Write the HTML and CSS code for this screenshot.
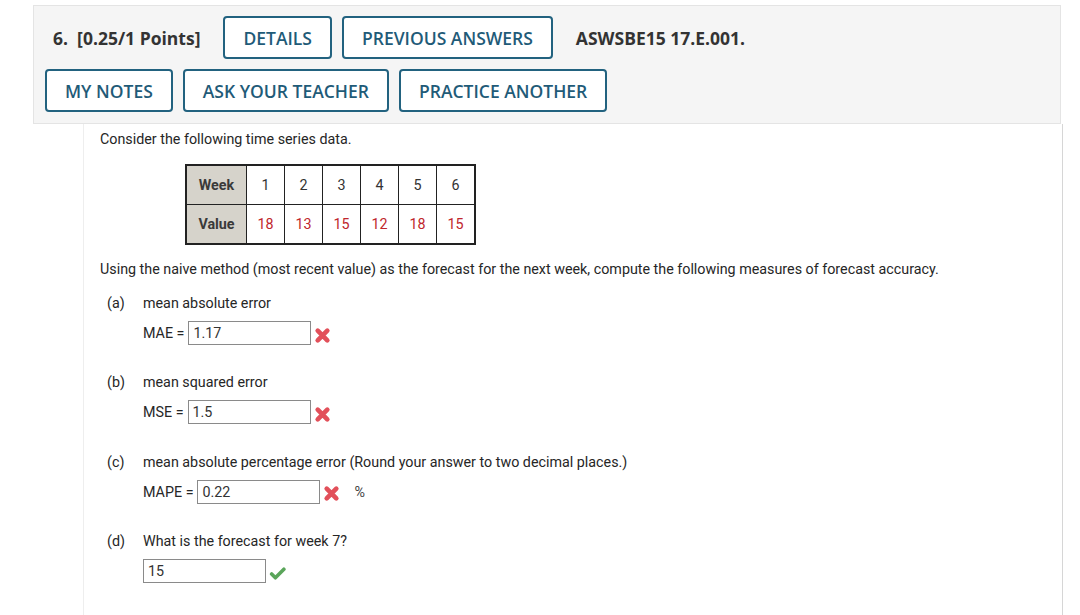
FILE: index.html
```html
<!DOCTYPE html>
<html>
<head>
<meta charset="utf-8">
<link rel="stylesheet" href="styles.css">
</head>
<body>
<div class="header">
  <div class="hrow">
    <span class="title">6.&nbsp; [0.25/1 Points]</span>
    <span class="btn">DETAILS</span>
    <span class="btn">PREVIOUS ANSWERS</span>
    <span class="code">ASWSBE15 17.E.001.</span>
  </div>
  <div class="hrow row2">
    <span class="btn">MY NOTES</span>
    <span class="btn">ASK YOUR TEACHER</span>
    <span class="btn">PRACTICE ANOTHER</span>
  </div>
</div>
<div class="content">
  <p class="intro">Consider the following time series data.</p>
  <table class="data">
    <tr><th>Week</th><td>1</td><td>2</td><td>3</td><td>4</td><td>5</td><td>6</td></tr>
    <tr><th>Value</th><td class="red">18</td><td class="red">13</td><td class="red">15</td><td class="red">12</td><td class="red">18</td><td class="red">15</td></tr>
  </table>
  <p class="using">Using the naive method (most recent value) as the forecast for the next week, compute the following measures of forecast accuracy.</p>

  <div class="part">
    <div class="plabel"><span class="pl">(a)</span><span>mean absolute error</span></div>
    <div class="answer"><span class="eq">MAE =</span><span class="inp">1.17</span><svg class="ico x" viewBox="0 0 16 16"><path d="M3.5 3.5L12.5 12.5M12.5 3.5L3.5 12.5"/></svg></div>
  </div>
  <div class="part">
    <div class="plabel"><span class="pl">(b)</span><span>mean squared error</span></div>
    <div class="answer"><span class="eq">MSE =</span><span class="inp">1.5</span><svg class="ico x" viewBox="0 0 16 16"><path d="M3.5 3.5L12.5 12.5M12.5 3.5L3.5 12.5"/></svg></div>
  </div>
  <div class="part">
    <div class="plabel"><span class="pl">(c)</span><span>mean absolute percentage error (Round your answer to two decimal places.)</span></div>
    <div class="answer"><span class="eq">MAPE =</span><span class="inp">0.22</span><svg class="ico x" viewBox="0 0 16 16"><path d="M3.5 3.5L12.5 12.5M12.5 3.5L3.5 12.5"/></svg><span class="pct">%</span></div>
  </div>
  <div class="part">
    <div class="plabel"><span class="pl">(d)</span><span>What is the forecast for week 7?</span></div>
    <div class="answer"><span class="inp">15</span><svg class="ico chk" viewBox="0 0 16 16"><path d="M2.5 8.5L6 12L14 4"/></svg></div>
  </div>
</div>
</body>
</html>
```
FILE: styles.css
```css
html, body {
  margin: 0;
  padding: 0;
  background: #ffffff;
}
body {
  font-family: Roboto, "Liberation Sans", sans-serif;
  color: #262626;
  font-size: 14.3px;
}
.header {
  margin: 5px 0 0 33px;
  width: 1028px;
  background: #f5f5f5;
  border: 1px solid #e4e4e4;
  padding: 10px 0 10px 11px;
  box-sizing: border-box;
  height: 119px;
}
.hrow {
  display: flex;
  align-items: center;
  gap: 10px;
  height: 43px;
}
.row2 {
  margin-top: 10px;
}
.title {
  font-family: "Open Sans", sans-serif;
  font-weight: 700;
  font-size: 17.5px;
  color: #333;
  margin-left: 8px;
  margin-right: 13px;
}
.code {
  font-family: "Open Sans", sans-serif;
  font-weight: 700;
  font-size: 17.5px;
  color: #333;
  margin-left: 13px;
}
.btn {
  font-family: "Open Sans", sans-serif;
  font-size: 17.5px;
  font-weight: 600;
  color: #1f5b78;
  background: #fff;
  border: 2px solid #22627f;
  border-radius: 4px;
  height: 43px;
  box-sizing: border-box;
  display: flex;
  align-items: center;
  padding: 0 18px;
}
.content {
  margin-left: 83px;
  width: 980px;
  box-sizing: border-box;
  border-left: 1px solid #eeeeee;
  border-right: 1px solid #d6d6d6;
  padding: 5px 0 40px 16px;
  min-height: 500px;
}
.intro {
  margin: 0;
  line-height: 20px;
}
table.data {
  border-collapse: collapse;
  margin: 15px 0 0 85px;
  border: 2px solid #222;
}
table.data th, table.data td {
  border: 1px solid #222;
  height: 38px;
  padding: 0;
  text-align: center;
  font-size: 14.3px;
}
table.data th {
  background: #d6d3cb;
  width: 59px;
  font-weight: 700;
  color: #3a3a3a;
}
table.data td {
  width: 37px;
  color: #333;
}
table.data td.red {
  color: #c0262d;
}
.using {
  margin: 14px 0 0 0;
  line-height: 20px;
}
.part {
  margin-top: 27.4px;
  padding-left: 7px;
}
.part:first-of-type {
  margin-top: 14px;
}
.plabel {
  display: flex;
  line-height: 20px;
}
.pl {
  width: 36px;
}
.answer {
  display: flex;
  align-items: center;
  margin-top: 8px;
  margin-left: 36px;
  height: 24px;
}
.eq {
  margin-right: 4px;
}
.inp {
  width: 123px;
  height: 24px;
  box-sizing: border-box;
  border: 1px solid #8a8a8a;
  padding: 0 4px;
  line-height: 22px;
  color: #333;
  background: #fff;
}
.ico {
  width: 17px;
  height: 17px;
  margin-left: 3px;
  margin-top: 4px;
  fill: none;
  stroke-linecap: round;
  stroke-linejoin: round;
}
.ico.x path {
  stroke: #e2505a;
  stroke-width: 4.4;
}
.ico.chk path {
  stroke: #5aa55a;
  stroke-width: 3.4;
}
.pct {
  margin-left: 14px;
  color: #444;
}
```
